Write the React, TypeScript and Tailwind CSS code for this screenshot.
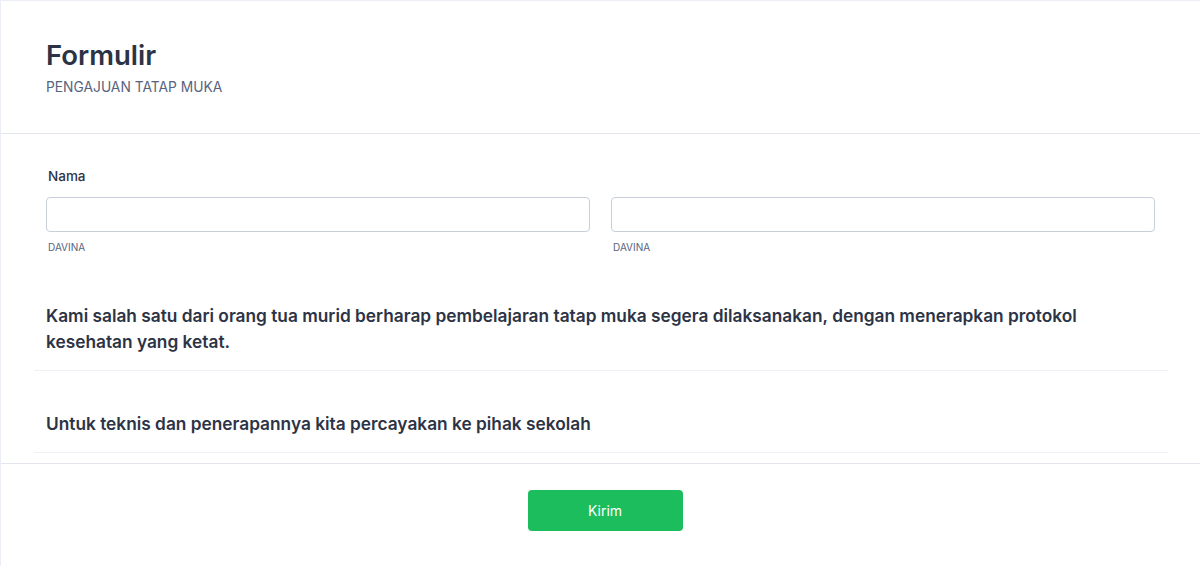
export default function App() {
  return (
    <div className="h-[566px] w-full overflow-hidden border-l border-t border-[#eceef5] bg-white font-['Inter',sans-serif] text-[#2c3345]">
      <header className="border-b border-[#e3e5ef] px-[45px] pb-[37px] pt-[38px]">
        <h1 className="text-[27.5px] font-semibold leading-[32px]">Formulir</h1>
        <p className="mt-[7px] text-[13.8px] leading-[18px] text-[#57647e]">PENGAJUAN TATAP MUKA</p>
      </header>

      <main className="ml-[33px] mr-[32px]">
        <div className="px-3 pt-[32px]">
          <label className="ml-[2px] block text-[13.5px] font-medium leading-5">Nama</label>
          <div className="mt-[11px] grid grid-cols-2 gap-[21px] pr-[1px]">
            <div>
              <input className="h-[35px] w-full rounded border border-[#c8ceda] px-3 text-sm outline-none" />
              <div className="ml-[2px] mt-[8px] text-[10px] leading-[14px] text-[#57647e]">DAVINA</div>
            </div>
            <div>
              <input className="h-[35px] w-full rounded border border-[#c8ceda] px-3 text-sm outline-none" />
              <div className="ml-[2px] mt-[8px] text-[10px] leading-[14px] text-[#57647e]">DAVINA</div>
            </div>
          </div>
        </div>

        <div className="mt-[34px] border-b border-[#eef0f5] px-3 pb-[15px] pt-[15px]">
          <p className="text-[17.3px] font-semibold leading-[26px]">
            Kami salah satu dari orang tua murid berharap pembelajaran tatap muka segera dilaksanakan, dengan menerapkan protokol kesehatan yang ketat.
          </p>
        </div>

        <div className="border-b border-[#eef0f5] px-3 pb-[15px] pt-[40px]">
          <p className="text-[17.3px] font-semibold leading-[26px]">
            Untuk teknis dan penerapannya kita percayakan ke pihak sekolah
          </p>
        </div>
      </main>

      <footer className="mt-[10px] flex justify-center border-t border-[#e3e5ef] pl-[9px] pt-[26px]">
        <button className="h-[41px] w-[155px] rounded bg-[#1bbd5c] text-sm font-normal text-white">Kirim</button>
      </footer>
    </div>
  )
}
